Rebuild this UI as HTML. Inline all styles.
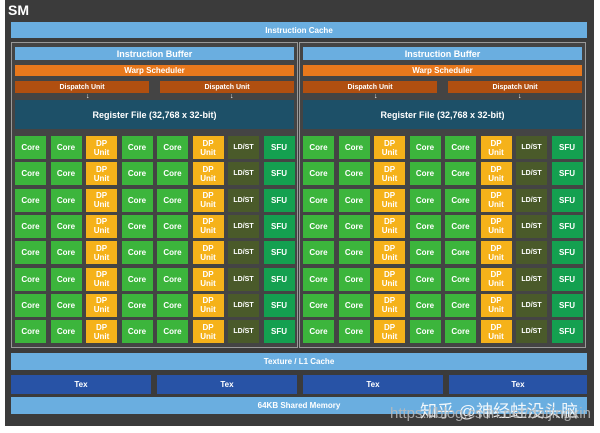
<!DOCTYPE html><html><head><style>
body{margin:0;width:600px;height:433px;background:#fff;position:relative;overflow:hidden;font-family:"Liberation Sans",sans-serif;font-weight:bold}
.a{position:absolute;display:flex;align-items:center;justify-content:center;color:#fff;box-sizing:border-box}
.bl{background:#6aaee0;color:#fff;font-size:9px}
.c{font-size:8px;line-height:9px;text-align:center}
</style></head><body>
<div class="a" style="left:5px;top:0;width:589px;height:426px;background:#3b3b3b"></div>
<div class="a" style="left:8px;top:2px;font-size:14px">SM</div>
<div class="a bl" style="left:11px;top:22px;width:576px;height:16px;font-size:8px">Instruction Cache</div>
<div id="p"></div>
<div class="a bl" style="left:11px;top:353px;width:576px;height:17px;font-size:8px">Texture / L1 Cache</div>
<div class="a" style="left:11px;top:375px;width:140px;height:19px;background:#2853a6;font-size:8px">Tex</div>
<div class="a" style="left:157px;top:375px;width:140px;height:19px;background:#2853a6;font-size:8px">Tex</div>
<div class="a" style="left:303px;top:375px;width:140px;height:19px;background:#2853a6;font-size:8px">Tex</div>
<div class="a" style="left:449px;top:375px;width:138px;height:19px;background:#2853a6;font-size:8px">Tex</div>
<div class="a bl" style="left:11px;top:397px;width:576px;height:17px;font-size:8px">64KB Shared Memory</div>
<div class="a" style="left:420px;top:397px;font-size:17px;font-weight:normal;color:#fff;font-family:'Liberation Sans','Noto Sans CJK SC',sans-serif;opacity:.9">知乎 @神经蛙没头脑</div>
<div class="a" style="left:390px;top:405px;font-size:15px;font-weight:normal;color:#bbb;opacity:.85">https://blog.csdn.net/daijingxin</div>
<script>
var h='';
[11,299].forEach(function(x){
 h+='<div class="a" style="left:'+x+'px;top:42px;width:287px;height:306px;border:1px solid #999;background:#444"></div>';
 h+='<div class="a bl" style="left:'+(x+4)+'px;top:47px;width:279px;height:13px">Instruction Buffer</div>';
 h+='<div class="a" style="left:'+(x+4)+'px;top:65px;width:279px;height:11px;background:#e8781c;font-size:8px">Warp Scheduler</div>';
 h+='<div class="a" style="left:'+(x+4)+'px;top:81px;width:134px;height:12px;background:#b04f10;font-size:7px">Dispatch Unit</div>';
 h+='<div class="a" style="left:'+(x+149)+'px;top:81px;width:134px;height:12px;background:#b04f10;font-size:7px">Dispatch Unit</div>';
 h+='<div class="a" style="left:'+(x+75)+'px;top:93px;font-size:7px">&#8595;</div><div class="a" style="left:'+(x+219)+'px;top:93px;font-size:7px">&#8595;</div>';
 h+='<div class="a" style="left:'+(x+4)+'px;top:100px;width:279px;height:29px;background:#1d5068;font-size:9px">Register File (32,768 x 32-bit)</div>';
 for(var r=0;r<8;r++){for(var c=0;c<8;c++){
  var t=['Core','Core','DP<br>Unit','Core','Core','DP<br>Unit','LD/ST','SFU'][c];
  var bg=['#3cb53c','#3cb53c','#f5b21a','#3cb53c','#3cb53c','#f5b21a','#4a5a2a','#14a050'][c];
  h+='<div class="a c" style="left:'+(x+4+c*35.5)+'px;top:'+(136+r*26.3)+'px;width:31px;height:23px;background:'+bg+';font-size:'+(c==6?7:8)+'px">'+t+'</div>';
 }}
});
document.getElementById('p').innerHTML=h;
</script>
</body></html>
